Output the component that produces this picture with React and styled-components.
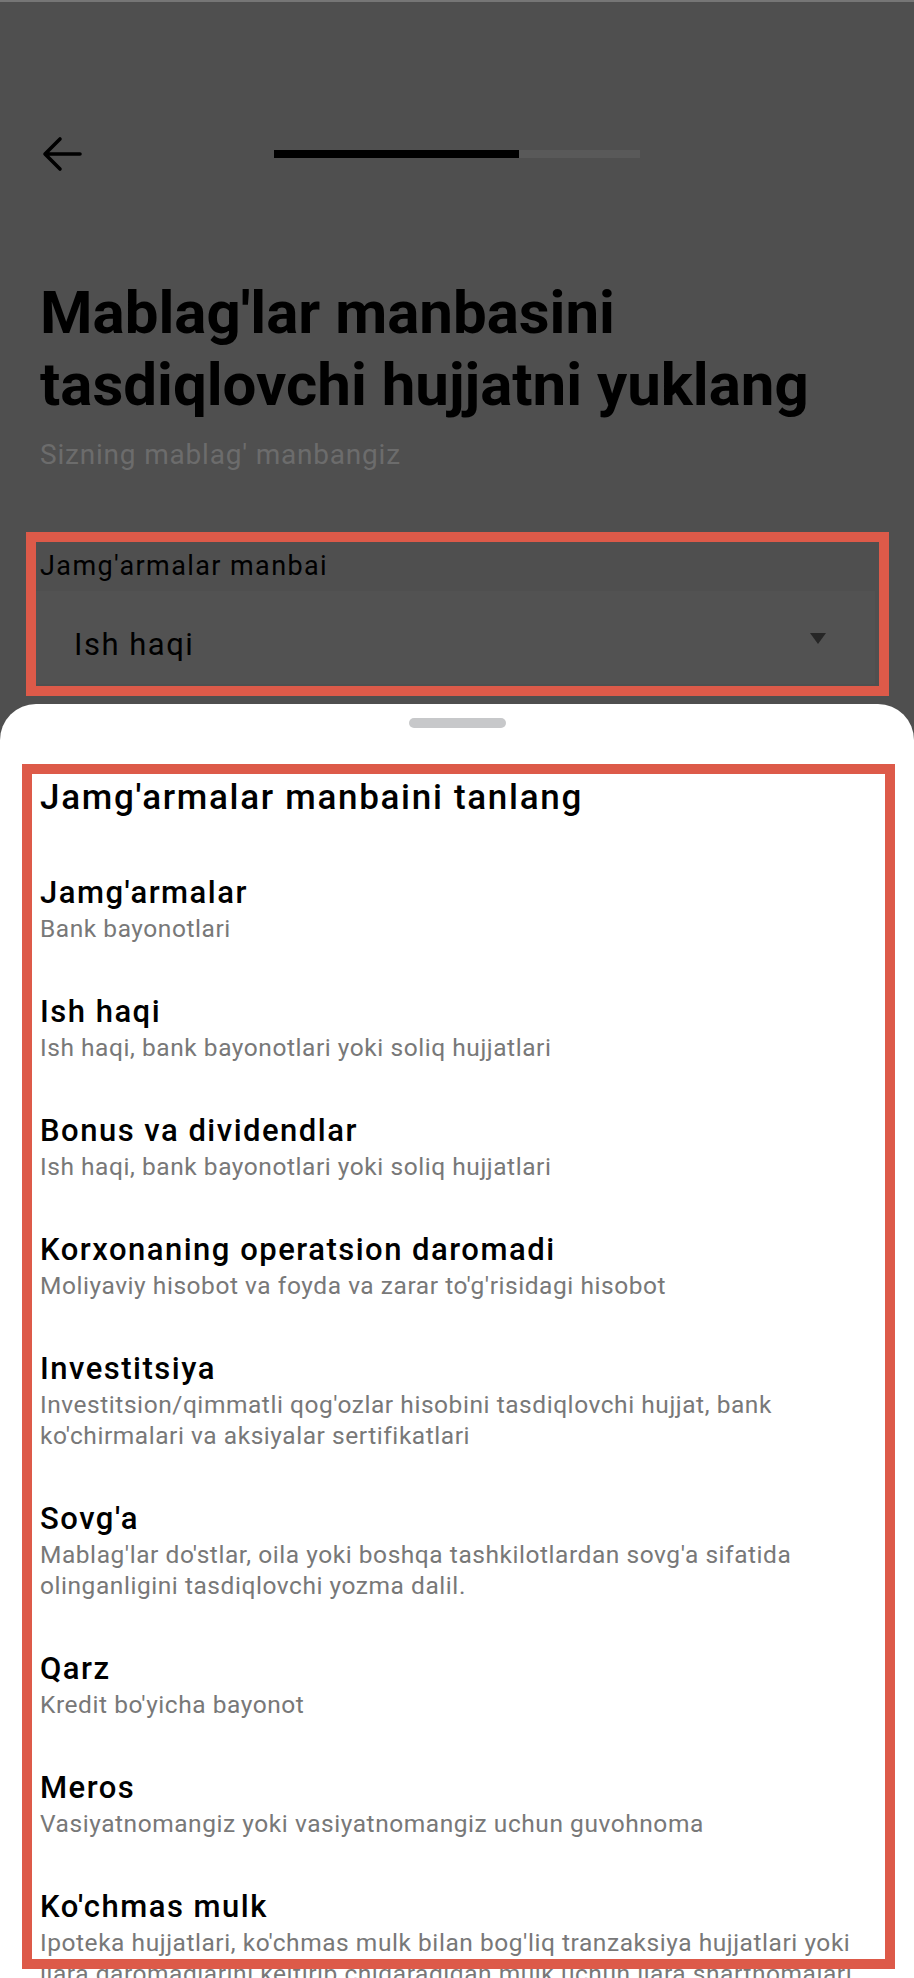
import React from 'react';
import styled, { createGlobalStyle } from 'styled-components';

const GlobalStyle = createGlobalStyle`
  html, body {
    margin: 0;
    padding: 0;
    height: 1978px;
    overflow: hidden;
    background: #4f4f4f;
  }
  body {
    font-family: Roboto, "Noto Sans", Arial, sans-serif;
    -webkit-font-smoothing: antialiased;
  }
`;

const annotation = '#dd5a49';

const Screen = styled.div`
  width: 914px;
  height: 1978px;
  overflow: hidden;
  background: #4f4f4f;
  border-top: 2px solid #767676;
  box-sizing: border-box;
  display: flex;
  flex-direction: column;
`;

const TopBar = styled.div`
  display: flex;
  align-items: center;
  height: 36px;
  margin-top: 134px;
  padding-left: 42px;
`;

const BackButton = styled.button`
  display: flex;
  align-items: center;
  justify-content: center;
  width: 40px;
  height: 36px;
  padding: 0;
  border: 0;
  background: transparent;
  cursor: pointer;
`;

const Progress = styled.div`
  width: 366px;
  height: 8px;
  margin-left: 192px;
  background: #595959;
`;

const ProgressFill = styled.div`
  height: 100%;
  background: #000;
`;

const Title = styled.h1`
  margin: 105px 0 0;
  padding: 0 40px;
  font-size: 60px;
  line-height: 72px;
  font-weight: 700;
  color: #000;
`;

const Subtitle = styled.p`
  margin: 17px 0 0;
  padding: 0 40px;
  font-size: 28px;
  line-height: 34px;
  letter-spacing: 0.8px;
  color: #6c6c6c;
`;

const FieldOutline = styled.div`
  margin: 60px 0 0 26px;
  width: 863px;
  border: 10px solid ${annotation};
  box-sizing: border-box;
  padding-bottom: 2px;
`;

const FieldLabel = styled.label`
  display: block;
  height: 49px;
  line-height: 49px;
  padding-left: 4px;
  font-size: 27px;
  letter-spacing: 1.4px;
  color: #000;
`;

const Select = styled.div`
  display: flex;
  align-items: center;
  justify-content: space-between;
  height: 93px;
  box-sizing: border-box;
  margin-right: 4px;
  padding: 14px 49px 0 38px;
  background: #525252;
  font-size: 31px;
  letter-spacing: 1.5px;
  color: #000;
`;

const Caret = styled.span`
  width: 0;
  height: 0;
  margin-bottom: 12px;
  border-left: 8px solid transparent;
  border-right: 8px solid transparent;
  border-top: 11px solid #262626;
`;

const Sheet = styled.div`
  flex: 1;
  margin-top: 8px;
  background: #fff;
  border-radius: 36px 36px 0 0;
  display: flex;
  flex-direction: column;
  padding-top: 14px;
`;

const Handle = styled.div`
  align-self: center;
  width: 97px;
  height: 10px;
  border-radius: 5px;
  background: #c7c8ca;
`;

const OptionList = styled.div`
  position: relative;
  margin: 36px 0 0 22px;
  width: 873px;
  height: 1205px;
  box-sizing: border-box;
  padding: 14px 0 0 18px;

  &::after {
    content: '';
    position: absolute;
    inset: 0;
    border: 10px solid ${annotation};
    pointer-events: none;
  }
`;

const ListHeading = styled.h2`
  margin: 0 0 56px;
  font-size: 35px;
  line-height: 40px;
  font-weight: 500;
  letter-spacing: 1.7px;
  color: #000;
`;

const Option = styled.div`
  margin-bottom: 49px;
  padding-right: 20px;
`;

const OptionTitle = styled.div`
  font-size: 31px;
  line-height: 37px;
  font-weight: 500;
  letter-spacing: 1.5px;
  color: #000;
`;

const OptionHint = styled.div`
  margin-top: 2px;
  font-size: 24.5px;
  line-height: 31px;
  letter-spacing: 0.55px;
  color: #787878;
`;

const options = [
  { title: "Jamg'armalar", hint: 'Bank bayonotlari' },
  { title: 'Ish haqi', hint: 'Ish haqi, bank bayonotlari yoki soliq hujjatlari' },
  { title: 'Bonus va dividendlar', hint: 'Ish haqi, bank bayonotlari yoki soliq hujjatlari' },
  { title: 'Korxonaning operatsion daromadi', hint: "Moliyaviy hisobot va foyda va zarar to'g'risidagi hisobot" },
  {
    title: 'Investitsiya',
    hint: "Investitsion/qimmatli qog'ozlar hisobini tasdiqlovchi hujjat, bank ko'chirmalari va aksiyalar sertifikatlari",
  },
  {
    title: "Sovg'a",
    hint: "Mablag'lar do'stlar, oila yoki boshqa tashkilotlardan sovg'a sifatida olinganligini tasdiqlovchi yozma dalil.",
  },
  { title: 'Qarz', hint: "Kredit bo'yicha bayonot" },
  { title: 'Meros', hint: 'Vasiyatnomangiz yoki vasiyatnomangiz uchun guvohnoma' },
  {
    title: "Ko'chmas mulk",
    hint: "Ipoteka hujjatlari, ko'chmas mulk bilan bog'liq tranzaksiya hujjatlari yoki ijara daromadlarini keltirib chiqaradigan mulk uchun ijara shartnomalari",
  },
];

const BackArrow = () => (
  <svg width="40" height="36" viewBox="0 0 40 36" fill="none">
    <path
      d="M38 18H4M18 3L3 18l15 15"
      stroke="#000"
      strokeWidth="3.6"
      strokeLinecap="round"
      strokeLinejoin="round"
    />
  </svg>
);

export default function App() {
  const step = 0.67;

  return (
    <>
      <GlobalStyle />
      <Screen>
        <TopBar>
          <BackButton aria-label="Orqaga">
            <BackArrow />
          </BackButton>
          <Progress>
            <ProgressFill style={{ width: `${step * 100}%` }} />
          </Progress>
        </TopBar>

        <Title>
          Mablag'lar manbasini
          <br />
          tasdiqlovchi hujjatni yuklang
        </Title>
        <Subtitle>Sizning mablag' manbangiz</Subtitle>

        <FieldOutline>
          <FieldLabel>Jamg'armalar manbai</FieldLabel>
          <Select>
            <span>Ish haqi</span>
            <Caret />
          </Select>
        </FieldOutline>

        <Sheet>
          <Handle />
          <OptionList>
            <ListHeading>Jamg'armalar manbaini tanlang</ListHeading>
            {options.map(o => (
              <Option key={o.title}>
                <OptionTitle>{o.title}</OptionTitle>
                <OptionHint>{o.hint}</OptionHint>
              </Option>
            ))}
          </OptionList>
        </Sheet>
      </Screen>
    </>
  );
}
